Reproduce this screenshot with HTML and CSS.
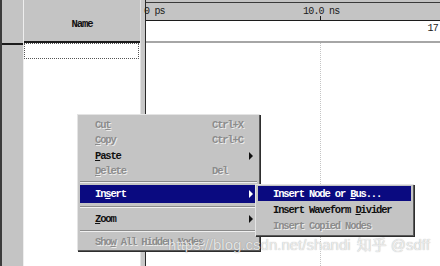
FILE: index.html
```html
<!DOCTYPE html>
<html>

<head>
    <link rel="stylesheet" href="styles.css">
    <title>Waveform Editor</title>
</head>

<body>
    <div class="app">
        <div class="gutter">
            <div class="gutter-head"></div>
        </div>

        <div class="names">
            <div class="names-head">Name</div>
            <div class="names-body">
                <div class="focus-row"></div>
            </div>
        </div>

        <div class="split"></div>

        <div class="wave">
            <div class="wave-ruler">
                <span class="t0">0 ps</span>
                <span class="t10">10.0 ns</span>
                <span class="tick"></span>
            </div>
            <div class="wave-time"><span>17</span></div>
            <div class="wave-body">
                <div class="grid-line"></div>
            </div>
        </div>

        <!-- right click menu -->
        <div class="menu">
            <div class="item off"><span>Cu<u>t</u></span><span class="key">Ctrl+X</span></div>
            <div class="item off"><span><u>C</u>opy</span><span class="key">Ctrl+C</span></div>
            <div class="item"><span><u>P</u>aste</span><span class="arrow"></span></div>
            <div class="item off"><span><u>D</u>elete</span><span class="key">Del</span></div>
            <div class="sep first"></div>
            <div class="item hot"><span>In<u>s</u>ert</span><span class="arrow"></span></div>
            <div class="sep"></div>
            <div class="item"><span><u>Z</u>oom</span><span class="arrow"></span></div>
            <div class="sep"></div>
            <div class="item off"><span>Sho<u>w</u> All Hidden Nodes</span></div>
        </div>

        <div class="submenu">
            <div class="item hot"><span>Insert Node or <u>B</u>us...</span></div>
            <div class="item"><span>Insert Waveform <u>D</u>ivider</span></div>
            <div class="item off"><span>Insert Copied Nodes</span></div>
        </div>

        <div class="watermark">https://blog.csdn.net/shandi<span class="zh">知乎 @sdff</span></div>
    </div>
</body>

</html>
```

FILE: styles.css
```css
body {
    margin: 0;
    background: #ffffff;
    font-family: "Liberation Mono", monospace;
}

.app {
    position: relative;
    display: flex;
    height: 266px;
    overflow: hidden;
    background: #c4c4c4;
}

.gutter {
    width: 21px;
    padding-top: 3px;
    border-left: 2px solid #3c3c3c;
    border-right: 1px solid #eeeeee;
    background: #c4c4c4;
}

.gutter-head {
    height: 40px;
    border-bottom: 2px solid #1c1c1c;
}

.names {
    width: 116px;
    display: flex;
    flex-direction: column;
    padding-top: 3px;
}

.names-head {
    height: 40px;
    border-bottom: 2px solid #1c1c1c;
    display: flex;
    align-items: center;
    justify-content: center;
    padding-top: 4px;
    box-sizing: border-box;
    font-size: 10.5px;
    font-weight: bold;
    letter-spacing: -1px;
    color: #111111;
}

.names-body {
    flex: 1;
    background: #ffffff;
}

.focus-row {
    height: 16px;
    margin-right: 1px;
    border: 1px dotted #555555;
    box-sizing: border-box;
}

.split {
    width: 6px;
    border-left: 1px solid #e2e2e2;
    border-right: 1px solid #2a2a2a;
    background: #c8c8c8;
    box-sizing: border-box;
}

.wave {
    flex: 1;
    display: flex;
    flex-direction: column;
    padding-top: 2px;
    background: #c4c4c4;
}

.wave-ruler {
    position: relative;
    height: 19px;
    border-top: 1px solid #3a3a3a;
    border-bottom: 1px solid #1c1c1c;
    box-sizing: border-box;
    background: #c4c4c4;
    font-size: 10px;
    letter-spacing: -0.8px;
    color: #1a1a1a;
}

.t0 {
    position: absolute;
    left: -2px;
    top: 3px;
}

.t10 {
    position: absolute;
    left: 157px;
    top: 3px;
}

.tick {
    position: absolute;
    left: 174px;
    bottom: 0;
    width: 1px;
    height: 4px;
    background: #1a1a1a;
}

.wave-time {
    height: 22px;
    background: #ffffff;
    border-bottom: 2px solid #a6a6a6;
    box-sizing: border-box;
    text-align: right;
    font-size: 10px;
    letter-spacing: -0.8px;
    color: #1a1a1a;
    padding: 2px 2px 0 0;
}

.wave-body {
    flex: 1;
    background: #ffffff;
}

.grid-line {
    height: 100%;
    margin-left: 174px;
    border-left: 1px dotted #c4c4c4;
}

/* popup menus */

.menu,
.submenu {
    position: absolute;
    background: #c4c4c4;
    box-sizing: border-box;
    box-shadow: inset 1px 1px #e4e4e4, inset -1px -1px #5a5a5a, 1px 1px #2e2e2e;
    font-size: 10.5px;
    font-weight: bold;
    letter-spacing: -1.15px;
    color: #101010;
}

.menu {
    left: 77px;
    top: 114px;
    width: 183px;
    height: 137px;
    padding: 3px 3px 1px 3px;
}

.submenu {
    left: 255px;
    top: 184px;
    width: 159px;
    height: 52px;
    padding: 2px 3px;
}

.item {
    height: 15.5px;
    display: flex;
    align-items: center;
    padding-left: 15px;
    position: relative;
}

.submenu .item {
    height: 16px;
}

.item.hot {
    height: 18px;
    background: #0a0a80;
    color: #ffffff;
}

.submenu .item.hot {
    height: 15px;
    margin-bottom: 1px;
}

.item.off {
    color: #8c8c8c;
    text-shadow: 1px 1px #ececec;
}

.key {
    position: absolute;
    left: 132px;
}

.arrow {
    position: absolute;
    right: 4px;
    top: 50%;
    margin-top: -4px;
    border-left: 4px solid #101010;
    border-top: 4px solid transparent;
    border-bottom: 4px solid transparent;
}

.hot .arrow {
    border-left-color: #ffffff;
}

.sep {
    height: 0;
    margin: 3px 0;
    border-top: 1px solid #8a8a8a;
    border-bottom: 1px solid #f0f0f0;
}

.sep.first {
    margin: 2px 0;
}

.watermark {
    position: absolute;
    left: 168px;
    top: 233px;
    font-family: "Liberation Sans", "Noto Sans CJK SC", sans-serif;
    font-size: 15px;
    color: rgba(245, 245, 245, 0.85);
    text-shadow: 0 0 1px rgba(0, 0, 0, 0.35);
    white-space: nowrap;
}

.zh {
    margin-left: 6px;
}
```
